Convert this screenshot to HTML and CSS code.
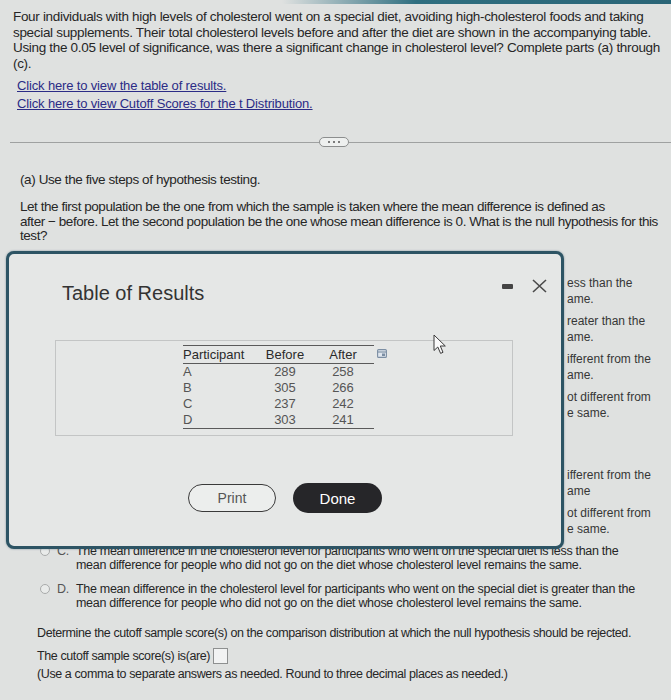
FILE: index.html
```html
<!DOCTYPE html>
<html lang="en">
<head>
<meta charset="utf-8">
<title>Paired t test question</title>
<link rel="stylesheet" href="styles.css">
</head>
<body>
<div class="topband"></div>
<main class="page">
  <section class="question">
    <p class="intro">Four individuals with high levels of cholesterol went on a special diet, avoiding high-cholesterol foods and taking<br>special supplements. Their total cholesterol levels before and after the diet are shown in the accompanying table.<br>Using the 0.05 level of significance, was there a significant change in cholesterol level? Complete parts (a) through<br>(c).</p>
    <p class="links"><a href="#" class="link">Click here to view the table of results.</a><br><a href="#" class="link">Click here to view Cutoff Scores for the t Distribution.</a></p>
  </section>

  <div class="divider"><span class="rule rule-left"></span><span class="pill"><i></i><i></i><i></i></span><span class="rule"></span></div>

  <section class="part">
    <p class="step">(a) Use the five steps of hypothesis testing.</p>
    <p class="prompt">Let the first population be the one from which the sample is taken where the mean difference is defined as<br>after &minus; before. Let the second population be the one whose mean difference is 0. What is the null hypothesis for this<br>test?</p>

    <div class="covered">
      <ul class="peek">
        <li>ess than the<br>ame.</li>
        <li>reater than the<br>ame.</li>
        <li>ifferent from the<br>ame.</li>
        <li>ot different from<br>e same.</li>
        <li class="peek-gap">ifferent from the<br>ame</li>
        <li>ot different from<br>e same.</li>
      </ul>
    </div>

    <ul class="options">
      <li class="option"><span class="radio"></span><span class="letter">C.</span><span class="otext">The mean difference in the cholesterol level for participants who went on the special diet is less than the<br>mean difference for people who did not go on the diet whose cholesterol level remains the same.</span></li>
      <li class="option option-d"><span class="radio"></span><span class="letter">D.</span><span class="otext">The mean difference in the cholesterol level for participants who went on the special diet is greater than the<br>mean difference for people who did not go on the diet whose cholesterol level remains the same.</span></li>
    </ul>

    <p class="determine">Determine the cutoff sample score(s) on the comparison distribution at which the null hypothesis should be rejected.</p>
    <p class="answer">The cutoff sample score(s) is(are) <span class="answer-box"></span><br>(Use a comma to separate answers as needed. Round to three decimal places as needed.)</p>
  </section>
</main>

<div class="modal">
  <div class="modal-head">
    <h2 class="modal-title">Table of Results</h2>
    <div class="modal-controls">
      <span class="minimize"></span>
      <svg class="close" width="15" height="14" viewBox="0 0 15 14"><path d="M1 1 L14 13 M14 1 L1 13" stroke="#4a4a4a" stroke-width="1.6" fill="none"/></svg>
    </div>
  </div>
  <div class="frame">
    <div class="table-wrap">
      <table class="results">
        <thead>
          <tr><th class="c1">Participant</th><th class="c2">Before</th><th class="c3">After</th></tr>
        </thead>
        <tbody>
          <tr><td class="c1">A</td><td class="c2">289</td><td class="c3">258</td></tr>
          <tr><td class="c1">B</td><td class="c2">305</td><td class="c3">266</td></tr>
          <tr><td class="c1">C</td><td class="c2">237</td><td class="c3">242</td></tr>
          <tr><td class="c1">D</td><td class="c2">303</td><td class="c3">241</td></tr>
        </tbody>
      </table>
      <svg class="copy-icon" width="10" height="9" viewBox="0 0 10 9"><rect x="0.6" y="0.6" width="8.8" height="7.8" rx="1" fill="#dfe6ee" stroke="#7b8ea3" stroke-width="1.1"/><path d="M0.6 3 H9.4" stroke="#7b8ea3" stroke-width="1.1"/><rect x="5" y="4.5" width="3" height="2.5" fill="#7b8ea3"/></svg>
    </div>
  </div>
  <div class="modal-actions">
    <button class="btn btn-outline">Print</button>
    <button class="btn btn-solid">Done</button>
  </div>
</div>

<svg class="cursor" width="14" height="21" viewBox="0 0 14 21"><path d="M1 1 L1 16.5 L4.8 13 L7.6 19.4 L10 18.3 L7.3 12 L12.3 12 Z" fill="#fafafa" stroke="#3a3a3a" stroke-width="1" stroke-linejoin="round"/></svg>
</body>
</html>
```

FILE: styles.css
```css
* { box-sizing: border-box; }

html, body {
  margin: 0;
  padding: 0;
}

body {
  width: 671px;
  height: 700px;
  overflow: hidden;
  background: #dfe1e0;
  font-family: "Liberation Sans", Arial, sans-serif;
  color: #262626;
  position: relative;
}

.topband {
  height: 4px;
  background: linear-gradient(90deg, rgba(47,111,128,0) 0%, rgba(47,111,128,0) 42%, #2f6f80 62%, #2a6577 100%);
}

p { margin: 0; }

.intro {
  font-size: 13.5px;
  letter-spacing: -0.32px;
  line-height: 15.5px;
  padding: 5px 0 0 13px;
  white-space: nowrap;
}

.links {
  font-size: 13px;
  letter-spacing: -0.15px;
  line-height: 18px;
  margin-top: 6px;
  padding-left: 17px;
}

.link {
  color: #2b2c86;
  text-decoration: underline;
  text-underline-offset: 1px;
}

.divider {
  display: flex;
  align-items: center;
  height: 10px;
  margin-top: 24px;
  padding-left: 10px;
}

.rule {
  flex: 1;
  height: 1px;
  background: #9fa1a1;
}

.rule-left {
  flex: 0 0 309px;
}

.pill {
  display: flex;
  align-items: center;
  justify-content: center;
  gap: 3px;
  width: 30px;
  height: 10px;
  border: 1px solid #8c8e8e;
  border-radius: 5px;
  background: #eef0ef;
}

.pill i {
  width: 2px;
  height: 2px;
  border-radius: 1px;
  background: #555;
}

.part {
  padding-left: 20px;
}

.step {
  font-size: 13.5px;
  letter-spacing: -0.4px;
  line-height: 16px;
  margin-top: 25px;
}

.prompt {
  font-size: 13.5px;
  letter-spacing: -0.45px;
  line-height: 14.5px;
  margin-top: 12px;
  white-space: nowrap;
}

.covered {
  display: flex;
  justify-content: flex-start;
  padding-left: 547px;
  margin-top: 31px;
}

.peek {
  list-style: none;
  margin: 0;
  padding: 0;
  font-size: 12px;
  line-height: 16px;
  color: #363636;
}

.peek li {
  margin-bottom: 6px;
  white-space: nowrap;
}

.peek li.peek-gap {
  margin-top: 46px;
}

.options {
  list-style: none;
  margin: 1px 0 0 0;
  padding: 0;
  font-size: 12.5px;
  letter-spacing: -0.3px;
  line-height: 14px;
}

.option {
  display: flex;
  align-items: flex-start;
}

.option-d {
  margin-top: 10px;
}

.radio {
  flex: 0 0 auto;
  width: 10px;
  height: 10px;
  margin: 2px 0 0 20px;
  border: 1px solid #a9abab;
  border-radius: 50%;
  background: #e9ebea;
}

.letter {
  flex: 0 0 auto;
  width: 19px;
  margin-left: 7px;
  color: #555;
}

.otext {
  white-space: nowrap;
}

.determine {
  font-size: 12.5px;
  letter-spacing: -0.4px;
  line-height: 15px;
  margin-top: 16px;
  padding-left: 17px;
  white-space: nowrap;
}

.answer {
  font-size: 12.5px;
  letter-spacing: -0.4px;
  line-height: 18px;
  margin-top: 6px;
  padding-left: 17px;
  white-space: nowrap;
}

.answer-box {
  display: inline-block;
  width: 15px;
  height: 16px;
  border: 1px solid #8e9090;
  background: #f2f3f3;
  vertical-align: -4px;
}

/* Modal overlay */
.modal {
  position: absolute;
  left: 6px;
  top: 251px;
  width: 558px;
  height: 298px;
  border: 3px solid #2d5464;
  border-radius: 8px;
  background: #e5e7e6;
  box-shadow: 0 0 2px rgba(45,84,100,0.6);
}

.modal-head {
  display: flex;
  align-items: flex-start;
  justify-content: space-between;
  padding: 27px 14px 0 53px;
  height: 51px;
}

.modal-title {
  margin: 0;
  font-size: 20px;
  line-height: 24px;
  font-weight: normal;
  color: #333;
}

.modal-controls {
  display: flex;
  align-items: center;
  gap: 19px;
  margin-top: -2px;
}

.minimize {
  width: 11px;
  height: 5px;
  border-radius: 1px;
  background: #444;
}

.close {
  display: block;
}

.frame {
  margin: 35px 0 0 46px;
  width: 458px;
  height: 96px;
  border: 1px solid #c3c5c5;
  padding: 4px 0 0 127px;
}

.table-wrap {
  display: flex;
  align-items: flex-start;
}

.results {
  border-collapse: collapse;
  font-size: 13px;
}

.results th {
  font-weight: normal;
  color: #2a2a2a;
  height: 18px;
  padding: 0;
  border-top: 1.5px solid #5a5a5a;
  border-bottom: 1.5px solid #5a5a5a;
  line-height: 16px;
}

.results td {
  padding: 0;
  height: 16px;
  line-height: 16px;
  color: #555;
}

.results tbody tr:last-child td {
  border-bottom: 1.5px solid #5a5a5a;
}

.results .c1 { width: 75px; text-align: left; }
.results .c2 { width: 54px; text-align: center; }
.results .c3 { width: 62px; text-align: center; }

.copy-icon {
  margin: 4px 0 0 3px;
}

.modal-actions {
  display: flex;
  justify-content: center;
  align-items: center;
  gap: 17px;
  margin-top: 47px;
}

.btn {
  font-family: "Liberation Sans", Arial, sans-serif;
  border-radius: 16px;
  cursor: pointer;
}

.btn-outline {
  width: 88px;
  height: 28px;
  border: 1.5px solid #3a3a3a;
  background: #eceeed;
  color: #555;
  font-size: 14px;
}

.btn-solid {
  width: 89px;
  height: 30px;
  border: none;
  background: #262629;
  color: #fff;
  font-size: 15px;
}

.cursor {
  position: absolute;
  left: 433px;
  top: 334px;
}
```
